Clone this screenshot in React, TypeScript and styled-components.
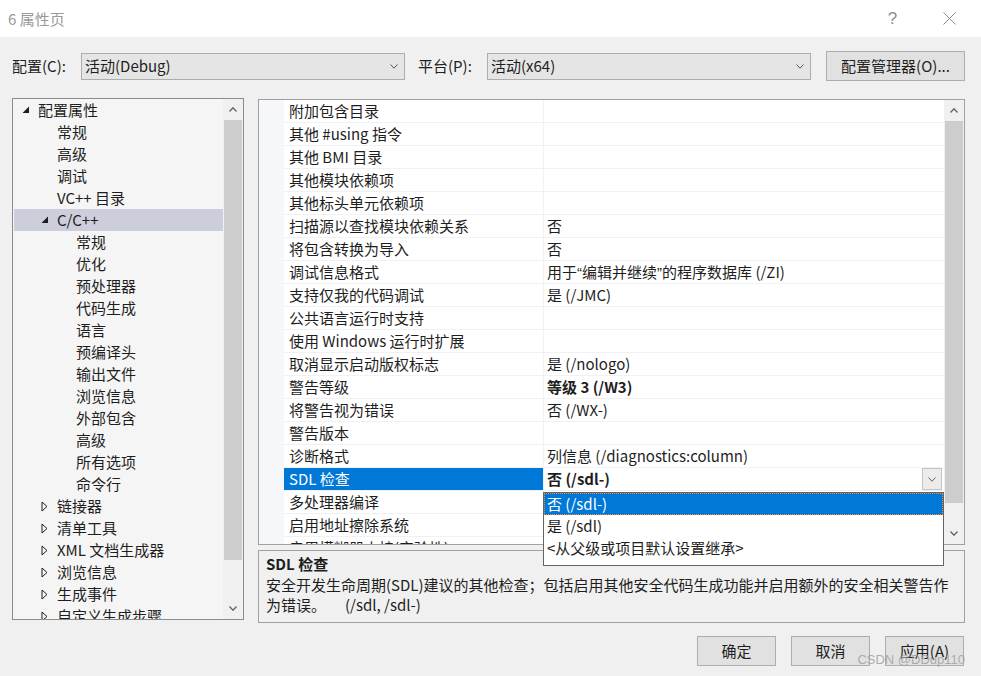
import React from 'react';
import styled, { createGlobalStyle } from 'styled-components';

const GlobalStyle = createGlobalStyle`
  html, body { margin: 0; padding: 0; background: #f0f0f0; }
  body {
    font-family: "Noto Sans CJK SC", "Liberation Sans", sans-serif;
    font-size: 15px;
    color: #1e1e1e;
  }
  * { box-sizing: border-box; }
`;

const Window = styled.div`
  position: relative;
  width: 981px;
  height: 676px;
  background: #f0f0f0;
  display: flex;
  flex-direction: column;
  overflow: hidden;
`;

const TitleBar = styled.div`
  height: 37px;
  flex-shrink: 0;
  background: #fff;
  display: flex;
  align-items: center;
  padding: 0 3px 0 8px;
`;

const Title = styled.div`
  flex: 1;
  color: #9a9a9a;
  line-height: 20px;
`;

const TitleButton = styled.div`
  width: 57px;
  height: 37px;
  display: flex;
  align-items: center;
  justify-content: center;
  color: #8c8c8c;
  font-family: "Liberation Sans", sans-serif;
  font-size: 17px;
`;

const ConfigRow = styled.div`
  display: flex;
  align-items: center;
  height: 30px;
  margin: 14px 0 0 12px;
`;

const FieldLabel = styled.span`
  width: 69px;
  line-height: 20px;
  white-space: nowrap;
`;

const Combo = styled.div<{ $gap?: number }>`
  width: 324px;
  height: 27px;
  margin-right: ${p => p.$gap ?? 0}px;
  border: 1px solid #adadad;
  background: #e5e5e5;
  display: flex;
  align-items: center;
  justify-content: space-between;
  padding: 0 6px 0 3px;
  line-height: 20px;
`;

const PushButton = styled.div<{ $w: number }>`
  width: ${p => p.$w}px;
  height: 30px;
  border: 1px solid #adadad;
  background: #e1e1e1;
  display: flex;
  align-items: center;
  justify-content: center;
  line-height: 20px;
  white-space: nowrap;
`;

const Main = styled.div`
  display: flex;
  gap: 14px;
  margin: 17px 0 0 12px;
  height: 525px;
`;

const TreePanel = styled.div`
  width: 232px;
  height: 522px;
  border: 1px solid #8c8c8c;
  background: #f5f5f5;
  display: flex;
`;

const TreeList = styled.div`
  flex: 1;
  overflow: hidden;
`;

const TreeRow = styled.div<{ $level: number; $selected?: boolean }>`
  height: 22px;
  display: flex;
  align-items: center;
  padding-left: ${p => 8 + p.$level * 19}px;
  margin-left: 1px;
  background: ${p => (p.$selected ? '#cccedb' : 'transparent')};
  white-space: nowrap;
  line-height: 22px;
`;

const Toggle = styled.span`
  width: 16px;
  height: 22px;
  flex-shrink: 0;
  display: flex;
  align-items: center;
`;

const ScrollBar = styled.div`
  width: 20px;
  flex-shrink: 0;
  background: #f0f0f0;
  display: flex;
  flex-direction: column;
`;

const ScrollArrow = styled.div`
  height: 21px;
  flex-shrink: 0;
  display: flex;
  align-items: center;
  justify-content: center;
`;

const ScrollTrack = styled.div`
  flex: 1;
  display: flex;
  flex-direction: column;
`;

const Thumb = styled.div<{ $size: number }>`
  height: ${p => p.$size}px;
  margin: 0 1px;
  background: #cdcdcd;
`;

const RightColumn = styled.div`
  position: relative;
  width: 707px;
  margin-top: 1px;
  display: flex;
  flex-direction: column;
  gap: 5px;
`;

const GridPanel = styled.div`
  height: 446px;
  border: 1px solid #a0a0a0;
  background: #fff;
  display: flex;
`;

const Gutter = styled.div`
  width: 25px;
  flex-shrink: 0;
  background: #f5f7fa;
`;

const GridRows = styled.div`
  flex: 1;
  overflow: hidden;
`;

const PropRow = styled.div`
  display: grid;
  grid-template-columns: 260px 1fr;
  height: 23px;
  border-bottom: 1px solid #eff1f5;
`;

const NameCell = styled.div<{ $selected?: boolean }>`
  padding-left: 5px;
  line-height: 22px;
  white-space: nowrap;
  overflow: hidden;
  border-right: 1px solid #eff1f5;
  background: ${p => (p.$selected ? '#0078d7' : 'transparent')};
  color: ${p => (p.$selected ? '#fff' : '#1e1e1e')};
`;

const ValueCell = styled.div<{ $bold?: boolean }>`
  display: flex;
  align-items: center;
  justify-content: space-between;
  padding: 0 2px 0 3px;
  line-height: 22px;
  white-space: nowrap;
  font-weight: ${p => (p.$bold ? 700 : 400)};
`;

const Quote = styled.span`
  font-family: "Liberation Sans", sans-serif;
`;

const DropButton = styled.div`
  width: 20px;
  height: 22px;
  border: 1px solid #c4c4c4;
  background: #ececec;
  display: flex;
  align-items: center;
  justify-content: center;
`;

const DropList = styled.div`
  position: absolute;
  left: 285px;
  top: 393px;
  width: 401px;
  height: 74px;
  border: 1px solid #646464;
  background: #fff;
  z-index: 2;
`;

const DropItem = styled.div<{ $active?: boolean }>`
  height: 22px;
  padding-left: 2px;
  line-height: 20px;
  white-space: nowrap;
  background: ${p => (p.$active ? '#0078d7' : 'transparent')};
  color: ${p => (p.$active ? '#fff' : '#1e1e1e')};
  border: 1px ${p => (p.$active ? 'dotted #ff8728' : 'solid transparent')};
`;

const DescPanel = styled.div`
  height: 73px;
  border: 1px solid #a0a0a0;
  background: #f0f0f0;
  padding: 2px 0 0 7px;
`;

const DescTitle = styled.div`
  font-weight: 700;
  line-height: 21px;
  margin-bottom: 1px;
`;

const DescLine = styled.div`
  line-height: 20px;
  white-space: nowrap;
`;

const Switches = styled.span`
  margin-left: 19px;
`;

const Footer = styled.div`
  display: flex;
  justify-content: flex-end;
  gap: 15px;
  margin-top: 13px;
  padding-right: 17px;
`;

const Watermark = styled.div`
  position: absolute;
  right: 16px;
  bottom: 9px;
  font-family: "Liberation Sans", sans-serif;
  font-size: 13px;
  color: rgba(160, 160, 160, 0.85);
  pointer-events: none;
`;

const Chevron = ({ up = false, w = 8, h = 5, color = '#606060', stroke = 1.3 }: { up?: boolean; w?: number; h?: number; color?: string; stroke?: number }) => (
  <svg width={w} height={h} viewBox={`0 0 ${w} ${h}`}>
    <polyline
      points={up ? `0.5,${h - 0.5} ${w / 2},0.8 ${w - 0.5},${h - 0.5}` : `0.5,0.5 ${w / 2},${h - 0.8} ${w - 0.5},0.5`}
      fill="none"
      stroke={color}
      strokeWidth={stroke}
    />
  </svg>
);

const Expanded = () => (
  <svg width="8" height="8" viewBox="0 0 8 8">
    <polygon points="7,0.5 7,7 0.5,7" fill="#1e1e1e" />
  </svg>
);

const Collapsed = () => (
  <svg width="7" height="11" viewBox="0 0 7 11">
    <polygon points="1,1 6,5.5 1,10" fill="none" stroke="#1e1e1e" strokeWidth="1" />
  </svg>
);

type Node = { level: number; label: string; toggle?: 'open' | 'closed'; selected?: boolean };

const tree: Node[] = [
  { level: 0, label: '配置属性', toggle: 'open' },
  { level: 1, label: '常规' },
  { level: 1, label: '高级' },
  { level: 1, label: '调试' },
  { level: 1, label: 'VC++ 目录' },
  { level: 1, label: 'C/C++', toggle: 'open', selected: true },
  ...['常规', '优化', '预处理器', '代码生成', '语言', '预编译头', '输出文件', '浏览信息', '外部包含', '高级', '所有选项', '命令行'].map(
    label => ({ level: 2, label })
  ),
  ...['链接器', '清单工具', 'XML 文档生成器', '浏览信息', '生成事件', '自定义生成步骤'].map(
    label => ({ level: 1, label, toggle: 'closed' as const })
  ),
];

type Prop = { name: string; value?: React.ReactNode; bold?: boolean; selected?: boolean };

const props: Prop[] = [
  { name: '附加包含目录' },
  { name: '其他 #using 指令' },
  { name: '其他 BMI 目录' },
  { name: '其他模块依赖项' },
  { name: '其他标头单元依赖项' },
  { name: '扫描源以查找模块依赖关系', value: '否' },
  { name: '将包含转换为导入', value: '否' },
  { name: '调试信息格式', value: <>用于<Quote>“</Quote>编辑并继续<Quote>”</Quote>的程序数据库 (/ZI)</> },
  { name: '支持仅我的代码调试', value: '是 (/JMC)' },
  { name: '公共语言运行时支持' },
  { name: '使用 Windows 运行时扩展' },
  { name: '取消显示启动版权标志', value: '是 (/nologo)' },
  { name: '警告等级', value: '等级 3 (/W3)', bold: true },
  { name: '将警告视为错误', value: '否 (/WX-)' },
  { name: '警告版本' },
  { name: '诊断格式', value: '列信息 (/diagnostics:column)' },
  { name: 'SDL 检查', value: '否 (/sdl-)', bold: true, selected: true },
  { name: '多处理器编译' },
  { name: '启用地址擦除系统' },
  { name: '启用模糊器支持(实验性)' },
];

export default function App() {
  return (
    <Window>
      <GlobalStyle />
      <TitleBar>
        <Title>6 属性页</Title>
        <TitleButton>?</TitleButton>
        <TitleButton>
          <svg width="13" height="13" viewBox="0 0 13 13">
            <path d="M0.5 0.5 L12.5 12.5 M12.5 0.5 L0.5 12.5" stroke="#8c8c8c" strokeWidth="1" />
          </svg>
        </TitleButton>
      </TitleBar>

      <ConfigRow>
        <FieldLabel>配置(C):</FieldLabel>
        <Combo $gap={13}>
          <span>活动(Debug)</span>
          <Chevron color="#555" stroke={1} />
        </Combo>
        <FieldLabel>平台(P):</FieldLabel>
        <Combo $gap={15}>
          <span>活动(x64)</span>
          <Chevron color="#555" stroke={1} />
        </Combo>
        <PushButton $w={139}>配置管理器(O)...</PushButton>
      </ConfigRow>

      <Main>
        <TreePanel>
          <TreeList>
            {tree.map((n, i) => (
              <TreeRow key={i} $level={n.level} $selected={n.selected}>
                <Toggle>
                  {n.toggle === 'open' && <Expanded />}
                  {n.toggle === 'closed' && <Collapsed />}
                </Toggle>
                {n.label}
              </TreeRow>
            ))}
          </TreeList>
          <ScrollBar>
            <ScrollArrow><Chevron up /></ScrollArrow>
            <ScrollTrack><Thumb $size={440} /></ScrollTrack>
            <ScrollArrow><Chevron /></ScrollArrow>
          </ScrollBar>
        </TreePanel>

        <RightColumn>
          <GridPanel>
            <Gutter />
            <GridRows>
              {props.map((p, i) => (
                <PropRow key={i}>
                  <NameCell $selected={p.selected}>{p.name}</NameCell>
                  <ValueCell $bold={p.bold}>
                    <span>{p.value}</span>
                    {p.selected && (
                      <DropButton><Chevron color="#606060" stroke={1} /></DropButton>
                    )}
                  </ValueCell>
                </PropRow>
              ))}
            </GridRows>
            <ScrollBar>
              <ScrollArrow><Chevron up /></ScrollArrow>
              <ScrollTrack><Thumb $size={382} /></ScrollTrack>
              <ScrollArrow><Chevron /></ScrollArrow>
            </ScrollBar>
          </GridPanel>

          <DropList>
            <DropItem $active>否 (/sdl-)</DropItem>
            <DropItem>是 (/sdl)</DropItem>
            <DropItem>&lt;从父级或项目默认设置继承&gt;</DropItem>
          </DropList>

          <DescPanel>
            <DescTitle>SDL 检查</DescTitle>
            <DescLine>安全开发生命周期(SDL)建议的其他检查；包括启用其他安全代码生成功能并启用额外的安全相关警告作</DescLine>
            <DescLine>为错误。<Switches>(/sdl, /sdl-)</Switches></DescLine>
          </DescPanel>
        </RightColumn>
      </Main>

      <Footer>
        <PushButton $w={79}>确定</PushButton>
        <PushButton $w={79}>取消</PushButton>
        <PushButton $w={79}>应用(A)</PushButton>
      </Footer>
      <Watermark>CSDN @DDup110</Watermark>
    </Window>
  );
}
